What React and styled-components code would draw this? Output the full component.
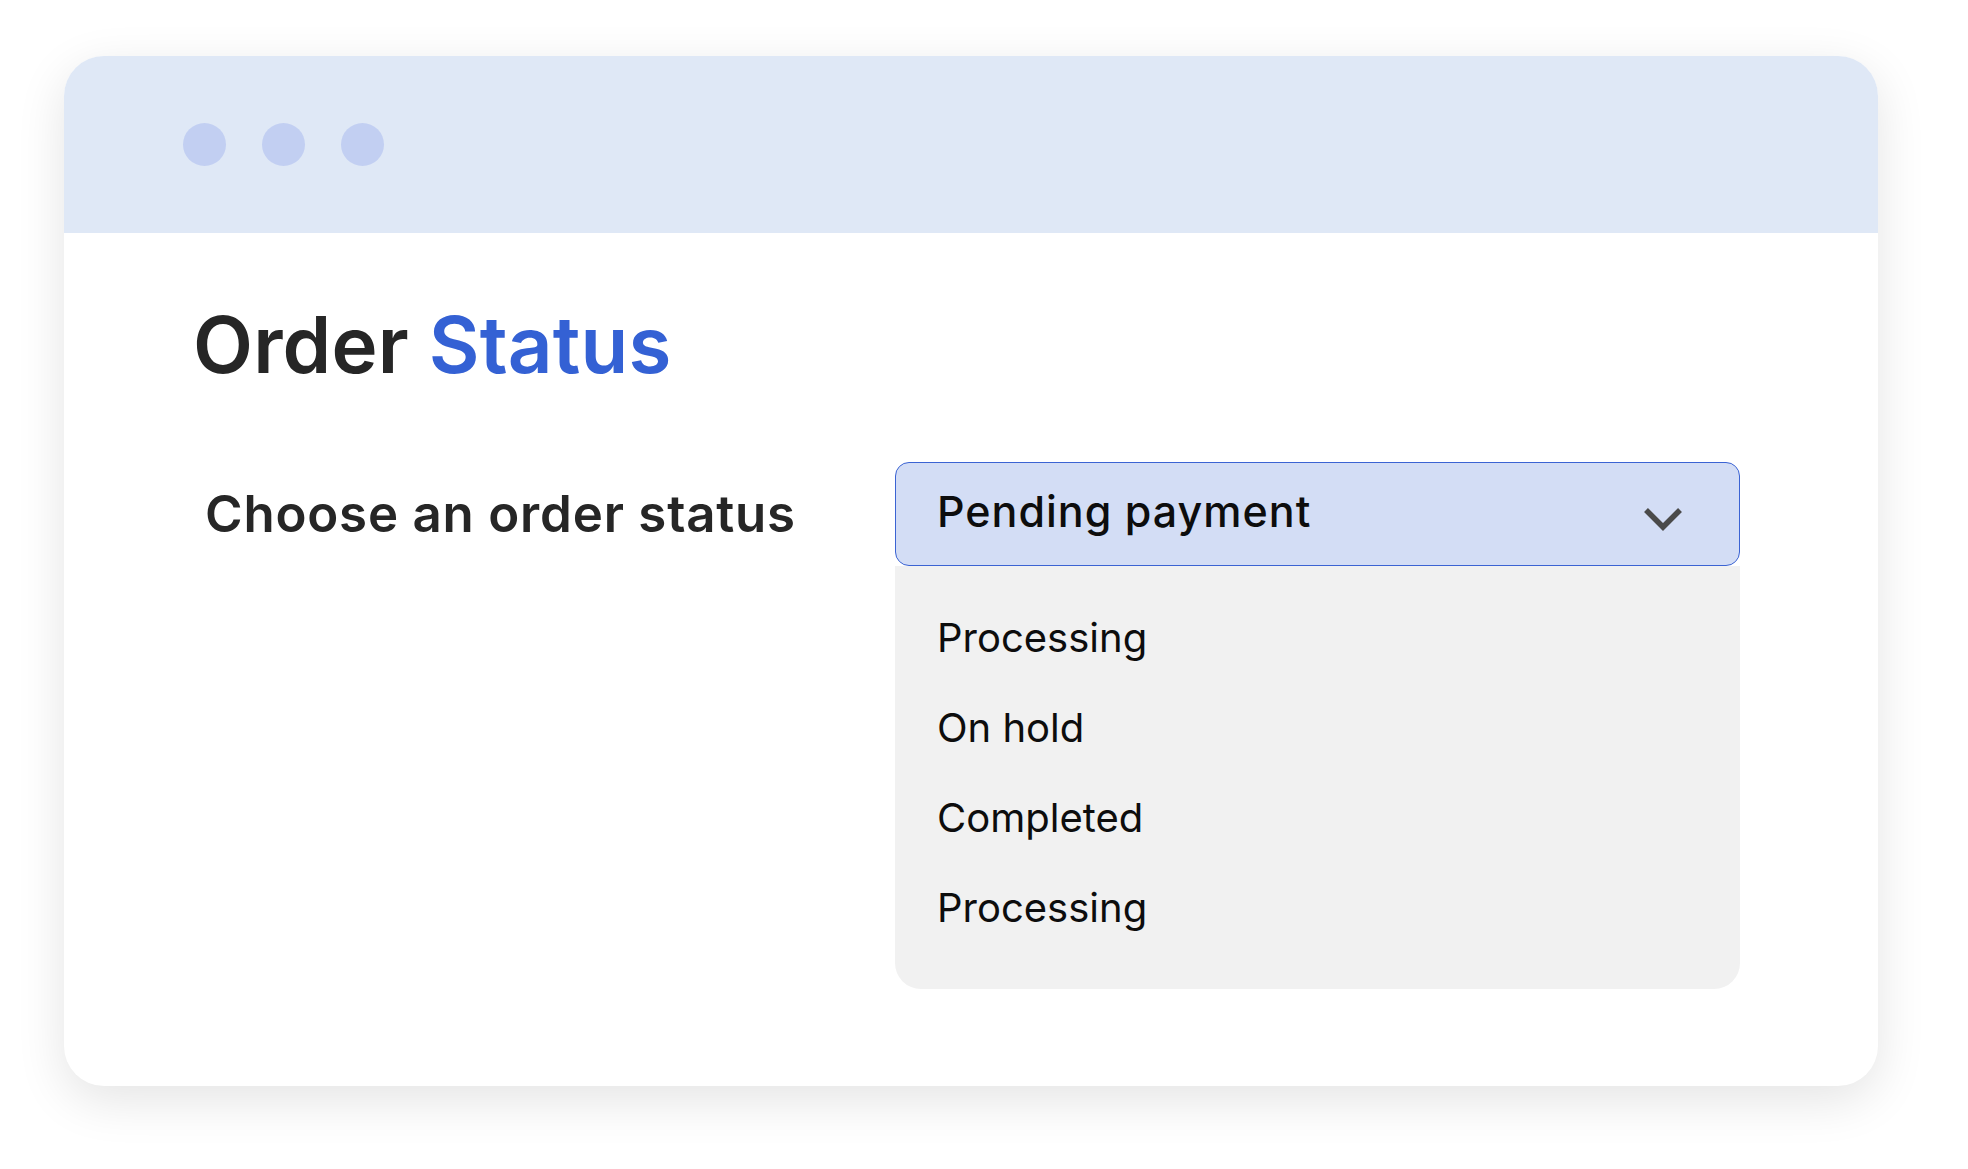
import React from "react";
import styled, { createGlobalStyle } from "styled-components";

const Global = createGlobalStyle`
  html, body { margin: 0; padding: 0; background: #ffffff; }
  body { font-family: "Inter", "Open Sans", sans-serif; }
  * { box-sizing: border-box; }
`;

const Page = styled.div`
  width: 1968px;
  height: 1169px;
  padding: 56px 0 0 64px;
`;

const Card = styled.div`
  width: 1814px;
  height: 1030px;
  background: #ffffff;
  border-radius: 40px;
  overflow: hidden;
  box-shadow: 0 14px 50px rgba(0, 0, 0, 0.11);
  display: flex;
  flex-direction: column;
`;

const TitleBar = styled.div`
  height: 177px;
  background: #dfe8f6;
  display: flex;
  align-items: center;
  gap: 36px;
  padding-left: 119px;
`;

const Dot = styled.span`
  width: 43px;
  height: 43px;
  border-radius: 50%;
  background: #c2cff2;
`;

const Body = styled.div`
  padding: 73px 0 0 129px;
  display: flex;
  flex-direction: column;
  gap: 78px;
`;

const Title = styled.h1`
  margin: 0;
  font-size: 78px;
  line-height: 1;
  font-weight: 600;
  color: #262626;
  letter-spacing: 0.2px;
`;

const Accent = styled.span`
  color: #3461d4;
`;

const Row = styled.div`
  display: flex;
  align-items: flex-start;
`;

const Label = styled.div`
  width: 702px;
  padding-left: 12px;
  font-size: 51px;
  line-height: 104px;
  font-weight: 600;
  color: #262626;
  letter-spacing: 0.8px;
`;

const SelectWrap = styled.div`
  width: 845px;
  display: flex;
  flex-direction: column;
`;

const SelectBox = styled.div`
  height: 104px;
  background: #d3ddf5;
  border: 1.5px solid #3b63d3;
  border-radius: 14px;
  display: flex;
  align-items: center;
  justify-content: space-between;
  padding: 0 56px 0 41px;
  position: relative;
  z-index: 1;
`;

const SelectText = styled.span`
  font-size: 43px;
  line-height: 1;
  font-weight: 500;
  color: #0d0d0d;
  letter-spacing: 1px;
  margin-bottom: 5px;
`;

const ChevronIcon = styled.svg`
  margin-top: 10px;
  flex: none;
`;

const Panel = styled.div`
  background: #f1f1f1;
  border-radius: 0 0 26px 26px;
  padding: 27px 0 36px 42px;
  display: flex;
  flex-direction: column;
`;

const Option = styled.div`
  font-size: 40px;
  line-height: 90px;
  font-weight: 400;
  color: #0d0d0d;
`;

const Chevron = () => (
  <ChevronIcon width="40" height="24" viewBox="0 0 40 24">
    <polyline
      points="3,3 20,20 37,3"
      fill="none"
      stroke="#4a4a4a"
      strokeWidth="5.5"
    />
  </ChevronIcon>
);

export default function App() {
  const options = ["Processing", "On hold", "Completed", "Processing"];
  return (
    <>
      <Global />
      <Page>
        <Card>
          <TitleBar>
            <Dot />
            <Dot />
            <Dot />
          </TitleBar>
          <Body>
            <Title>
              Order <Accent>Status</Accent>
            </Title>
            <Row>
              <Label>Choose an order status</Label>
              <SelectWrap>
                <SelectBox>
                  <SelectText>Pending payment</SelectText>
                  <Chevron />
                </SelectBox>
                <Panel>
                  {options.map((o, i) => (
                    <Option key={i}>{o}</Option>
                  ))}
                </Panel>
              </SelectWrap>
            </Row>
          </Body>
        </Card>
      </Page>
    </>
  );
}
